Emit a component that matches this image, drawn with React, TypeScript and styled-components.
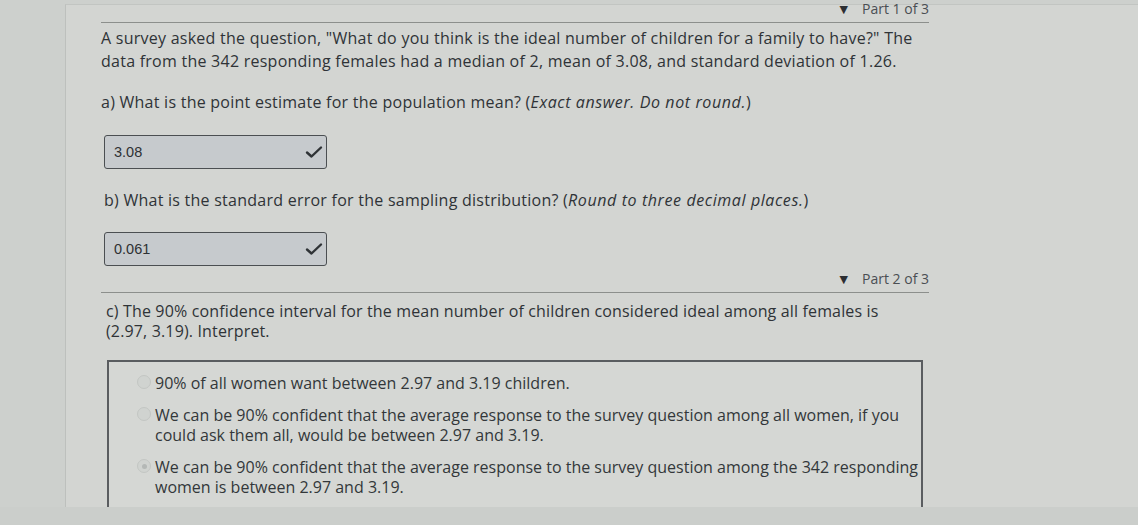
import React from "react";
import styled, { createGlobalStyle } from "styled-components";

const GlobalStyle = createGlobalStyle`
  html, body { margin: 0; padding: 0; }
  body {
    background: #cbcecb;
    font-family: "Open Sans", "DejaVu Sans", sans-serif;
    color: #34383b;
  }
`;

const Screen = styled.div`
  width: 1138px;
  height: 525px;
  display: flex;
  flex-direction: column;
  overflow: hidden;
  background: #cacdca;
`;

const Viewport = styled.div`
  height: 507px;
  flex: none;
  overflow: hidden;
  padding-left: 65px;
  background: #cdd0cd;
`;

const Panel = styled.div`
  margin-top: 4px;
  min-height: 600px;
  border-left: 1px solid #bdc0bd;
  border-top: 1px solid #c2c5c2;
  background: #d3d5d2;
  padding-left: 35px;
`;

const Section = styled.div`
  width: 828px;
  display: flex;
  flex-direction: column;
`;

const PartHeader = styled.div<{ $h: number; $pb: number }>`
  height: ${(p) => p.$h}px;
  box-sizing: border-box;
  display: flex;
  justify-content: flex-end;
  align-items: flex-end;
  gap: 14px;
  padding-bottom: ${(p) => p.$pb}px;
  border-bottom: 1px solid #8c8f8c;
  font-size: 14px;
  line-height: 14px;
  color: #4a4e52;
`;

const Tri = styled.span`
  font-size: 11px;
  color: #2c2f32;
`;

const Para = styled.p<{ $mt: number; $lh: number; $ml?: number; $ls?: number }>`
  margin: ${(p) => p.$mt}px 0 0 ${(p) => p.$ml ?? 0}px;
  font-size: 16px;
  letter-spacing: ${(p) => p.$ls ?? 0.25}px;
  line-height: ${(p) => p.$lh}px;
  color: #2f3337;
  white-space: nowrap;
  em { font-style: italic; letter-spacing: 0.6px; }
`;

const AnswerBox = styled.div<{ $mt: number }>`
  margin-top: ${(p) => p.$mt}px;
  margin-left: 3px;
  width: 223px;
  height: 34px;
  box-sizing: border-box;
  border: 1.5px solid #4b4f52;
  border-radius: 3px;
  background: #c6cacd;
  display: flex;
  align-items: center;
  justify-content: space-between;
  padding: 0 2px 0 9px;
  font-family: "Liberation Sans", Arial, sans-serif;
  font-size: 14.5px;
  color: #2e3134;
`;

const Choices = styled.div`
  margin-top: 19px;
  margin-left: 6px;
  width: 816px;
  box-sizing: border-box;
  border-top: 2px solid #5a5d60;
  border-left: 2px solid #5a5d60;
  border-right: 2px solid #5a5d60;
  padding: 11px 0 40px 28px;
  display: flex;
  flex-direction: column;
  gap: 12px;
  background: #d5d7d4;
`;

const Choice = styled.label`
  display: flex;
  align-items: flex-start;
  gap: 4px;
  font-size: 16px;
  line-height: 20px;
  color: #33373a;
`;

const Radio = styled.span<{ $on?: boolean }>`
  flex: none;
  width: 12px;
  height: 12px;
  margin-top: 2px;
  border-radius: 50%;
  border: 1px solid #c3c6c3;
  background: #d0d3d0;
  display: flex;
  align-items: center;
  justify-content: center;
  &::after {
    content: "";
    width: 5px;
    height: 5px;
    border-radius: 50%;
    background: ${(p) => (p.$on ? "#b4b8b6" : "transparent")};
  }
`;

const Bottom = styled.div`
  flex: 1;
  background: #cbcecb;
`;

const Check = () => (
  <svg width="20" height="16" viewBox="0 0 20 16">
    <path d="M3 8.5 L7.5 12.5 L17 3.5" fill="none" stroke="#2f3336" strokeWidth="2.4" strokeLinecap="round" strokeLinejoin="round" />
  </svg>
);

export default function App() {
  return (
    <>
      <GlobalStyle />
      <Screen>
        <Viewport>
          <Panel>
            <Section>
              <PartHeader $h={18} $pb={6}>
                <Tri>▼</Tri>
                <span>Part 1 of 3</span>
              </PartHeader>
              <Para $mt={4} $lh={23}>
                A survey asked the question, "What do you think is the ideal number of children for a family to have?" The
                <br />
                data from the 342 responding females had a median of 2, mean of 3.08, and standard deviation of 1.26.
              </Para>
              <Para $mt={18} $lh={23}>
                a) What is the point estimate for the population mean? (<em>Exact answer. Do not round.</em>)
              </Para>
              <AnswerBox $mt={21}>
                <span>3.08</span>
                <Check />
              </AnswerBox>
              <Para $mt={20} $lh={23} $ml={3}>
                b) What is the standard error for the sampling distribution? (<em>Round to three decimal places.</em>)
              </Para>
              <AnswerBox $mt={20}>
                <span>0.061</span>
                <Check />
              </AnswerBox>
              <PartHeader $h={27} $pb={6}>
                <Tri>▼</Tri>
                <span>Part 2 of 3</span>
              </PartHeader>
              <Para $mt={8} $lh={20} $ml={5} $ls={0.15}>
                c) The 90% confidence interval for the mean number of children considered ideal among all females is
                <br />
                (2.97, 3.19). Interpret.
              </Para>
              <Choices>
                <Choice>
                  <Radio />
                  <span>90% of all women want between 2.97 and 3.19 children.</span>
                </Choice>
                <Choice>
                  <Radio />
                  <span>
                    We can be 90% confident that the average response to the survey question among all women, if you
                    <br />
                    could ask them all, would be between 2.97 and 3.19.
                  </span>
                </Choice>
                <Choice>
                  <Radio $on />
                  <span>
                    We can be 90% confident that the average response to the survey question among the 342 responding
                    <br />
                    women is between 2.97 and 3.19.
                  </span>
                </Choice>
              </Choices>
            </Section>
          </Panel>
        </Viewport>
        <Bottom />
      </Screen>
    </>
  );
}
